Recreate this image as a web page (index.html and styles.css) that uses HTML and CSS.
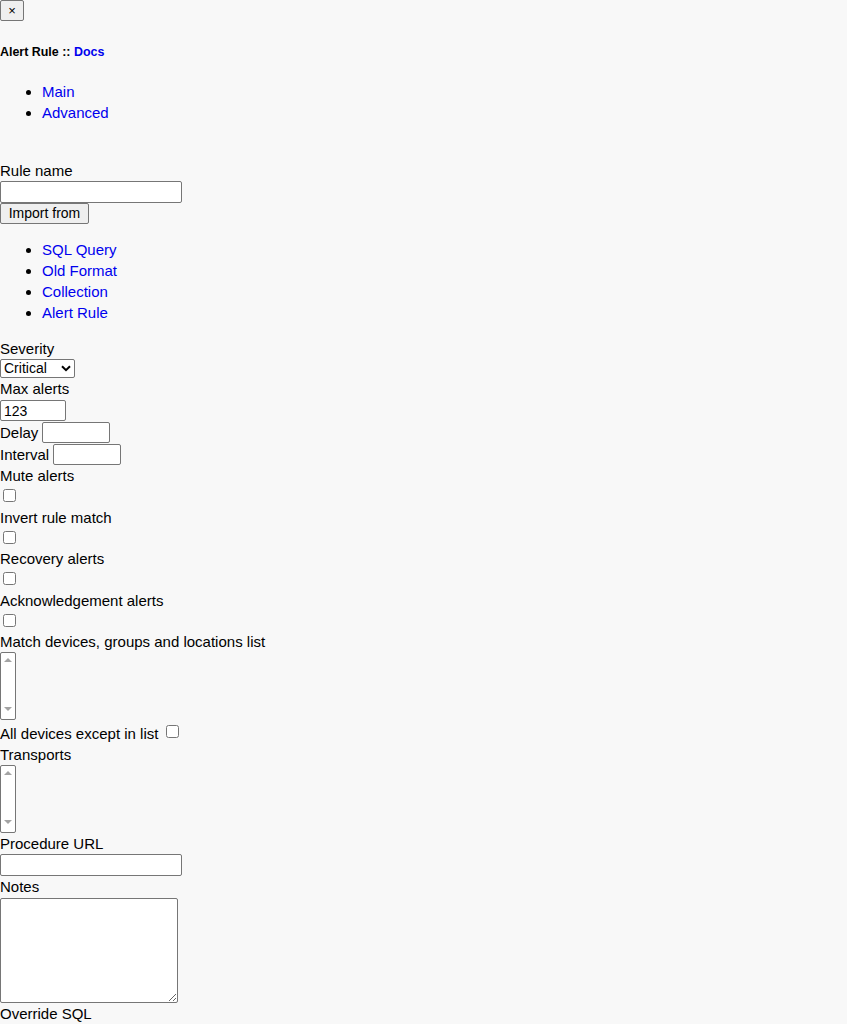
FILE: index.html
```html
<!DOCTYPE html>
<html lang="en">
<head>
<meta charset="utf-8">
<title>Alert Rule</title>
<link rel="stylesheet" href="styles.css">
</head>
<body>
<div class="modal">
  <button type="button" class="close-btn">×</button>
  <h5 class="title">Alert Rule :: <a href="#" class="link">Docs</a></h5>
  <ul class="tabs">
    <li><a href="#" class="link">Main</a></li>
    <li><a href="#" class="link">Advanced</a></li>
  </ul>
  <form class="rule-form">
    <div class="field rule-name">
      <label class="lbl">Rule name</label>
      <input type="text" class="ctl wide">
      <button type="button" class="btn import-btn">Import from</button>
    </div>
    <ul class="imports">
      <li><a href="#" class="link">SQL Query</a></li>
      <li><a href="#" class="link">Old Format</a></li>
      <li><a href="#" class="link">Collection</a></li>
      <li><a href="#" class="link">Alert Rule</a></li>
    </ul>
    <div class="field">
      <label class="lbl">Severity</label>
      <span class="sel-wrap">
        <select class="ctl sel"><option>Critical</option><option>Warning</option><option>OK</option></select>
        <svg class="chev" width="10" height="7" viewBox="0 0 10 7" aria-hidden="true"><path d="M1 1.2 L5 5.2 L9 1.2" fill="none" stroke="#000" stroke-width="2"/></svg>
      </span>
    </div>
    <div class="field">
      <label class="lbl">Max alerts</label>
      <input type="text" class="ctl num" value="123">
    </div>
    <div class="row">
      <label class="lbl">Delay</label>
      <input type="text" class="ctl num-inline">
    </div>
    <div class="row">
      <label class="lbl">Interval</label>
      <input type="text" class="ctl num-inline">
    </div>
    <div class="field">
      <label class="lbl">Mute alerts</label>
      <div class="check-line"><input type="checkbox" class="chk"></div>
    </div>
    <div class="field">
      <label class="lbl">Invert rule match</label>
      <div class="check-line"><input type="checkbox" class="chk"></div>
    </div>
    <div class="field">
      <label class="lbl">Recovery alerts</label>
      <div class="check-line"><input type="checkbox" class="chk"></div>
    </div>
    <div class="field">
      <label class="lbl">Acknowledgement alerts</label>
      <div class="check-line"><input type="checkbox" class="chk"></div>
    </div>
    <div class="field">
      <label class="lbl">Match devices, groups and locations list</label>
      <div class="listbox first" role="listbox"><span class="arr up"></span><span class="arr down"></span></div>
      <div class="inline-check">All devices except in list <input type="checkbox" class="chk-inline"></div>
    </div>
    <div class="field">
      <label class="lbl">Transports</label>
      <div class="listbox" role="listbox"><span class="arr up"></span><span class="arr down"></span></div>
    </div>
    <div class="field">
      <label class="lbl">Procedure URL</label>
      <input type="text" class="ctl wide">
    </div>
    <div class="field">
      <label class="lbl">Notes</label>
      <textarea class="ctl notes"></textarea>
    </div>
    <div class="field">
      <label class="lbl">Override SQL</label>
      <div class="check-line"><input type="checkbox" class="chk"></div>
    </div>
  </form>
</div>
</body>
</html>
```
FILE: styles.css
```css
html, body {
  margin: 0;
  padding: 0;
  background: #f8f8f8;
}
body {
  font-family: "Liberation Sans", Arial, sans-serif;
  font-size: 15px;
  line-height: 21px;
  color: #000;
}
.link {
  color: #0000ee;
  text-decoration: none;
}
.close-btn {
  display: block;
  box-sizing: border-box;
  width: 24px;
  height: 21px;
  margin: 0;
  padding: 0;
  font-family: "Liberation Sans", Arial, sans-serif;
  font-size: 13px;
  line-height: 17px;
  background: #efefef;
  border: 1px solid #767676;
  border-radius: 2px;
  color: #000;
}
.title {
  font-size: 12.45px;
  font-weight: bold;
  line-height: 15px;
  margin: 23.5px 0 21.3px;
}
.tabs, .imports {
  margin: 0;
  padding-left: 42px;
  list-style: disc;
}
.tabs li, .imports li {
  line-height: 21px;
}
.rule-form {
  margin: 37px 0 0;
}
.lbl {
  display: block;
  height: 21px;
}
.ctl {
  box-sizing: border-box;
  font-family: "Liberation Sans", Arial, sans-serif;
  font-size: 14px;
  margin: 0;
  color: #000;
  background: #fff;
  border: 1px solid #767676;
  border-radius: 2px;
  padding: 1px 3px;
}
.wide {
  display: block;
  width: 182px;
  height: 22px;
}
.btn {
  display: block;
  box-sizing: border-box;
  height: 21px;
  width: 89px;
  margin: 0;
  padding: 0 6px;
  font-family: "Liberation Sans", Arial, sans-serif;
  font-size: 14px;
  line-height: 17px;
  background: #efefef;
  border: 1px solid #767676;
  border-radius: 2px;
  color: #000;
}
.imports {
  margin: 15.5px 0 15px;
}
.sel-wrap {
  position: relative;
  display: block;
  width: 75px;
  height: 19px;
}
.sel {
  display: block;
  width: 75px;
  height: 19px;
  padding: 0 16px 0 3px;
  line-height: 17px;
  appearance: none;
  -webkit-appearance: none;
}
.chev {
  position: absolute;
  left: 61px;
  top: 6px;
  pointer-events: none;
}
.num {
  display: block;
  width: 66px;
  height: 21px;
  margin-top: 1px;
}
.row {
  display: flex;
  align-items: center;
  gap: 4px;
  height: 22px;
}
.row .lbl {
  display: inline;
}
.num-inline {
  width: 68px;
  height: 21px;
}
.check-line {
  box-sizing: border-box;
  height: 20.5px;
  padding-top: 3px;
}
.chk {
  display: block;
  width: 13px;
  height: 13px;
  margin: 0 0 0 3px;
}
.listbox {
  position: relative;
  box-sizing: border-box;
  width: 16px;
  height: 68px;
  background: #fff;
  border: 1px solid #767676;
  border-radius: 2px;
}
.listbox.first {
  margin-bottom: 3px;
}
.arr {
  position: absolute;
  left: 3px;
  width: 0;
  height: 0;
  border-left: 4px solid transparent;
  border-right: 4px solid transparent;
}
.arr.up {
  top: 5px;
  border-bottom: 4px solid #a3a3a3;
}
.arr.down {
  bottom: 8px;
  border-top: 4px solid #a3a3a3;
}
.inline-check {
  height: 21px;
}
.chk-inline {
  width: 13px;
  height: 13px;
  margin: 2px 0 0 3px;
  vertical-align: top;
}
.notes {
  display: block;
  width: 178px;
  height: 105px;
  margin-top: 1px;
  resize: both;
}
```
